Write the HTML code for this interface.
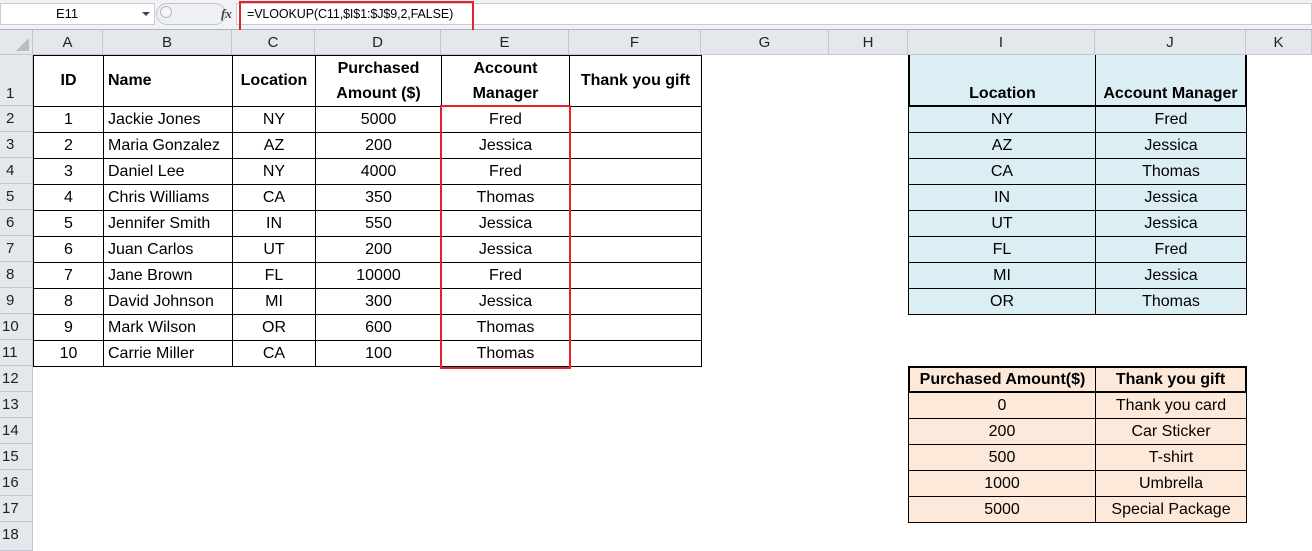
<!DOCTYPE html>
<html><head><meta charset="utf-8"><style>
*{margin:0;padding:0;box-sizing:border-box}
body{width:1312px;height:551px;overflow:hidden;background:#fff;position:relative;font-family:"Liberation Sans",sans-serif;font-size:16px;color:#000}
.a{position:absolute}
.c{position:absolute;display:flex;align-items:center;justify-content:center;white-space:nowrap;border:1px solid #000}
.l{justify-content:flex-start;padding-left:4px}
.b{font-weight:bold}
.h{position:absolute;display:flex;align-items:center;justify-content:center;background:#e4e7eb;border-right:1px solid #c5c9cf;border-bottom:1px solid #c5c9cf;color:#222;font-size:15px}
</style></head><body>
<div class="a" style="left:0;top:0;width:1312px;height:30px;background:#f0f2f5;border-bottom:1px solid #aeb5bf"></div>
<div class="a" style="left:0;top:3px;width:155px;height:22px;background:#fff;border:1px solid #c8ccd2;font-size:13px;padding-left:55px;line-height:20px">E11</div>
<div class="a" style="left:142px;top:12px;width:0;height:0;border-left:4px solid transparent;border-right:4px solid transparent;border-top:4px solid #444"></div>
<div class="a" style="left:156px;top:3px;width:70px;height:22px;border:1px solid #c0c5cc;border-radius:11px;background:#eef0f3"></div>
<div class="a" style="left:160px;top:6px;width:12px;height:12px;border:1px solid #bbb;border-radius:6px;background:#f6f6f6"></div>
<div class="a" style="left:221px;top:6px;font-family:'Liberation Serif',serif;font-style:italic;font-weight:bold;font-size:13px;color:#444">fx</div>
<div class="a" style="left:236px;top:3px;width:1076px;height:22px;background:#fff;border:1px solid #c8ccd2"></div>
<div class="a" style="left:247px;top:7px;font-size:12.5px;letter-spacing:-0.1px">=VLOOKUP(C11,$I$1:$J$9,2,FALSE)</div>
<div class="a" style="left:239px;top:1px;width:235px;height:33px;border:2px solid #e8202a"></div>
<div class="h" style="left:0;top:30px;width:33px;height:25px"><div style="position:absolute;right:3px;bottom:3px;width:0;height:0;border-left:13px solid transparent;border-bottom:13px solid #b8bec6"></div></div>
<div class="h" style="left:33px;top:30px;width:70px;height:25px">A</div>
<div class="h" style="left:103px;top:30px;width:129px;height:25px">B</div>
<div class="h" style="left:232px;top:30px;width:83px;height:25px">C</div>
<div class="h" style="left:315px;top:30px;width:126px;height:25px">D</div>
<div class="h" style="left:441px;top:30px;width:128px;height:25px">E</div>
<div class="h" style="left:569px;top:30px;width:132px;height:25px">F</div>
<div class="h" style="left:701px;top:30px;width:128px;height:25px">G</div>
<div class="h" style="left:829px;top:30px;width:79px;height:25px">H</div>
<div class="h" style="left:908px;top:30px;width:187px;height:25px">I</div>
<div class="h" style="left:1095px;top:30px;width:151px;height:25px">J</div>
<div class="h" style="left:1246px;top:30px;width:66px;height:25px">K</div>
<div class="h" style="left:0;top:55px;width:33px;height:51px;align-items:flex-end;padding-bottom:3px;justify-content:flex-start;padding-left:6px">1</div>
<div class="h" style="left:0;top:106px;width:33px;height:26px;justify-content:flex-start;padding-left:6px">2</div>
<div class="h" style="left:0;top:132px;width:33px;height:26px;justify-content:flex-start;padding-left:6px">3</div>
<div class="h" style="left:0;top:158px;width:33px;height:26px;justify-content:flex-start;padding-left:6px">4</div>
<div class="h" style="left:0;top:184px;width:33px;height:26px;justify-content:flex-start;padding-left:6px">5</div>
<div class="h" style="left:0;top:210px;width:33px;height:26px;justify-content:flex-start;padding-left:6px">6</div>
<div class="h" style="left:0;top:236px;width:33px;height:26px;justify-content:flex-start;padding-left:6px">7</div>
<div class="h" style="left:0;top:262px;width:33px;height:26px;justify-content:flex-start;padding-left:6px">8</div>
<div class="h" style="left:0;top:288px;width:33px;height:26px;justify-content:flex-start;padding-left:6px">9</div>
<div class="h" style="left:0;top:314px;width:33px;height:26px;justify-content:flex-start;padding-left:2px">10</div>
<div class="h" style="left:0;top:340px;width:33px;height:26px;justify-content:flex-start;padding-left:2px">11</div>
<div class="h" style="left:0;top:366px;width:33px;height:26px;justify-content:flex-start;padding-left:2px">12</div>
<div class="h" style="left:0;top:392px;width:33px;height:26px;justify-content:flex-start;padding-left:2px">13</div>
<div class="h" style="left:0;top:418px;width:33px;height:26px;justify-content:flex-start;padding-left:2px">14</div>
<div class="h" style="left:0;top:444px;width:33px;height:26px;justify-content:flex-start;padding-left:2px">15</div>
<div class="h" style="left:0;top:470px;width:33px;height:26px;justify-content:flex-start;padding-left:2px">16</div>
<div class="h" style="left:0;top:496px;width:33px;height:26px;justify-content:flex-start;padding-left:2px">17</div>
<div class="h" style="left:0;top:522px;width:33px;height:29px;justify-content:flex-start;padding-left:2px;align-items:flex-start;padding-top:4px">18</div>

<div class="c b" style="left:33px;top:55px;width:71px;height:52px">ID</div>
<div class="c b l" style="left:103px;top:55px;width:130px;height:52px">Name</div>
<div class="c b" style="left:232px;top:55px;width:84px;height:52px">Location</div>
<div class="c b" style="left:315px;top:55px;width:127px;height:52px;text-align:center;line-height:25px">Purchased<br>Amount ($)</div>
<div class="c b" style="left:441px;top:55px;width:129px;height:52px;text-align:center;line-height:25px">Account<br>Manager</div>
<div class="c b" style="left:569px;top:55px;width:133px;height:52px">Thank you gift</div>

<div class="c" style="left:33px;top:106px;width:71px;height:27px">1</div><div class="c l" style="left:103px;top:106px;width:130px;height:27px">Jackie Jones</div><div class="c" style="left:232px;top:106px;width:84px;height:27px">NY</div><div class="c" style="left:315px;top:106px;width:127px;height:27px">5000</div><div class="c" style="left:441px;top:106px;width:129px;height:27px">Fred</div><div class="c" style="left:569px;top:106px;width:133px;height:27px"></div>
<div class="c" style="left:33px;top:132px;width:71px;height:27px">2</div><div class="c l" style="left:103px;top:132px;width:130px;height:27px">Maria Gonzalez</div><div class="c" style="left:232px;top:132px;width:84px;height:27px">AZ</div><div class="c" style="left:315px;top:132px;width:127px;height:27px">200</div><div class="c" style="left:441px;top:132px;width:129px;height:27px">Jessica</div><div class="c" style="left:569px;top:132px;width:133px;height:27px"></div>
<div class="c" style="left:33px;top:158px;width:71px;height:27px">3</div><div class="c l" style="left:103px;top:158px;width:130px;height:27px">Daniel Lee</div><div class="c" style="left:232px;top:158px;width:84px;height:27px">NY</div><div class="c" style="left:315px;top:158px;width:127px;height:27px">4000</div><div class="c" style="left:441px;top:158px;width:129px;height:27px">Fred</div><div class="c" style="left:569px;top:158px;width:133px;height:27px"></div>
<div class="c" style="left:33px;top:184px;width:71px;height:27px">4</div><div class="c l" style="left:103px;top:184px;width:130px;height:27px">Chris Williams</div><div class="c" style="left:232px;top:184px;width:84px;height:27px">CA</div><div class="c" style="left:315px;top:184px;width:127px;height:27px">350</div><div class="c" style="left:441px;top:184px;width:129px;height:27px">Thomas</div><div class="c" style="left:569px;top:184px;width:133px;height:27px"></div>
<div class="c" style="left:33px;top:210px;width:71px;height:27px">5</div><div class="c l" style="left:103px;top:210px;width:130px;height:27px">Jennifer Smith</div><div class="c" style="left:232px;top:210px;width:84px;height:27px">IN</div><div class="c" style="left:315px;top:210px;width:127px;height:27px">550</div><div class="c" style="left:441px;top:210px;width:129px;height:27px">Jessica</div><div class="c" style="left:569px;top:210px;width:133px;height:27px"></div>
<div class="c" style="left:33px;top:236px;width:71px;height:27px">6</div><div class="c l" style="left:103px;top:236px;width:130px;height:27px">Juan Carlos</div><div class="c" style="left:232px;top:236px;width:84px;height:27px">UT</div><div class="c" style="left:315px;top:236px;width:127px;height:27px">200</div><div class="c" style="left:441px;top:236px;width:129px;height:27px">Jessica</div><div class="c" style="left:569px;top:236px;width:133px;height:27px"></div>
<div class="c" style="left:33px;top:262px;width:71px;height:27px">7</div><div class="c l" style="left:103px;top:262px;width:130px;height:27px">Jane Brown</div><div class="c" style="left:232px;top:262px;width:84px;height:27px">FL</div><div class="c" style="left:315px;top:262px;width:127px;height:27px">10000</div><div class="c" style="left:441px;top:262px;width:129px;height:27px">Fred</div><div class="c" style="left:569px;top:262px;width:133px;height:27px"></div>
<div class="c" style="left:33px;top:288px;width:71px;height:27px">8</div><div class="c l" style="left:103px;top:288px;width:130px;height:27px">David Johnson</div><div class="c" style="left:232px;top:288px;width:84px;height:27px">MI</div><div class="c" style="left:315px;top:288px;width:127px;height:27px">300</div><div class="c" style="left:441px;top:288px;width:129px;height:27px">Jessica</div><div class="c" style="left:569px;top:288px;width:133px;height:27px"></div>
<div class="c" style="left:33px;top:314px;width:71px;height:27px">9</div><div class="c l" style="left:103px;top:314px;width:130px;height:27px">Mark Wilson</div><div class="c" style="left:232px;top:314px;width:84px;height:27px">OR</div><div class="c" style="left:315px;top:314px;width:127px;height:27px">600</div><div class="c" style="left:441px;top:314px;width:129px;height:27px">Thomas</div><div class="c" style="left:569px;top:314px;width:133px;height:27px"></div>
<div class="c" style="left:33px;top:340px;width:71px;height:27px">10</div><div class="c l" style="left:103px;top:340px;width:130px;height:27px">Carrie Miller</div><div class="c" style="left:232px;top:340px;width:84px;height:27px">CA</div><div class="c" style="left:315px;top:340px;width:127px;height:27px">100</div><div class="c" style="left:441px;top:340px;width:129px;height:27px">Thomas</div><div class="c" style="left:569px;top:340px;width:133px;height:27px"></div>
<div class="a" style="left:440px;top:105px;width:131px;height:264px;border:2px solid #e8202a"></div>

<div class="c b" style="left:908px;top:55px;width:188px;height:52px;background:#daeef3;align-items:flex-end;padding-bottom:2px;border-width:0 1px 2px 2px">Location</div>
<div class="c b" style="left:1095px;top:55px;width:152px;height:52px;background:#daeef3;align-items:flex-end;padding-bottom:2px;border-width:0 2px 2px 1px">Account Manager</div>
<div class="c" style="left:908px;top:106px;width:188px;height:27px;background:#daeef3">NY</div><div class="c" style="left:1095px;top:106px;width:152px;height:27px;background:#daeef3">Fred</div>
<div class="c" style="left:908px;top:132px;width:188px;height:27px;background:#daeef3">AZ</div><div class="c" style="left:1095px;top:132px;width:152px;height:27px;background:#daeef3">Jessica</div>
<div class="c" style="left:908px;top:158px;width:188px;height:27px;background:#daeef3">CA</div><div class="c" style="left:1095px;top:158px;width:152px;height:27px;background:#daeef3">Thomas</div>
<div class="c" style="left:908px;top:184px;width:188px;height:27px;background:#daeef3">IN</div><div class="c" style="left:1095px;top:184px;width:152px;height:27px;background:#daeef3">Jessica</div>
<div class="c" style="left:908px;top:210px;width:188px;height:27px;background:#daeef3">UT</div><div class="c" style="left:1095px;top:210px;width:152px;height:27px;background:#daeef3">Jessica</div>
<div class="c" style="left:908px;top:236px;width:188px;height:27px;background:#daeef3">FL</div><div class="c" style="left:1095px;top:236px;width:152px;height:27px;background:#daeef3">Fred</div>
<div class="c" style="left:908px;top:262px;width:188px;height:27px;background:#daeef3">MI</div><div class="c" style="left:1095px;top:262px;width:152px;height:27px;background:#daeef3">Jessica</div>
<div class="c" style="left:908px;top:288px;width:188px;height:27px;background:#daeef3">OR</div><div class="c" style="left:1095px;top:288px;width:152px;height:27px;background:#daeef3">Thomas</div>

<div class="c b" style="left:908px;top:366px;width:188px;height:27px;background:#fde9d9;border-width:2px 1px 2px 2px">Purchased Amount($)</div>
<div class="c b" style="left:1095px;top:366px;width:152px;height:27px;background:#fde9d9;border-width:2px 2px 2px 1px">Thank you gift</div>
<div class="c" style="left:908px;top:392px;width:188px;height:27px;background:#fde9d9">0</div><div class="c" style="left:1095px;top:392px;width:152px;height:27px;background:#fde9d9">Thank you card</div>
<div class="c" style="left:908px;top:418px;width:188px;height:27px;background:#fde9d9">200</div><div class="c" style="left:1095px;top:418px;width:152px;height:27px;background:#fde9d9">Car Sticker</div>
<div class="c" style="left:908px;top:444px;width:188px;height:27px;background:#fde9d9">500</div><div class="c" style="left:1095px;top:444px;width:152px;height:27px;background:#fde9d9">T-shirt</div>
<div class="c" style="left:908px;top:470px;width:188px;height:27px;background:#fde9d9">1000</div><div class="c" style="left:1095px;top:470px;width:152px;height:27px;background:#fde9d9">Umbrella</div>
<div class="c" style="left:908px;top:496px;width:188px;height:27px;background:#fde9d9">5000</div><div class="c" style="left:1095px;top:496px;width:152px;height:27px;background:#fde9d9">Special Package</div>
</body></html>
